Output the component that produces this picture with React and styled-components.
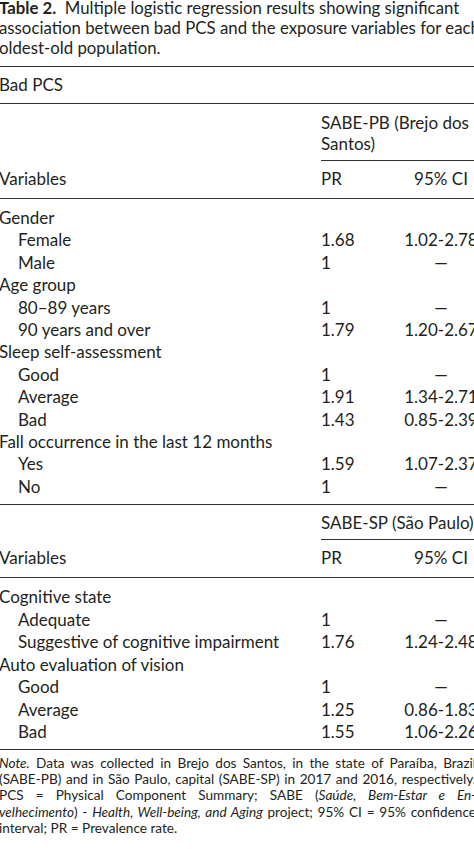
import styled, { createGlobalStyle } from "styled-components"

const GlobalStyle = createGlobalStyle`
    html, body {
        margin: 0;
        padding: 0;
        background: #FFFFFF;
        overflow: hidden;
    }
    body {
        font-family: Lato, "Open Sans", sans-serif;
        color: #231F20;
    }
`

const pb = [
    { label: "Gender" },
    { label: "Female", pr: "1.68", ci: "1.02-2.78", sub: true },
    { label: "Male", pr: "1", ci: "—", sub: true },
    { label: "Age group" },
    { label: "80–89 years", pr: "1", ci: "—", sub: true },
    { label: "90 years and over", pr: "1.79", ci: "1.20-2.67", sub: true },
    { label: "Sleep self-assessment" },
    { label: "Good", pr: "1", ci: "—", sub: true },
    { label: "Average", pr: "1.91", ci: "1.34-2.71", sub: true },
    { label: "Bad", pr: "1.43", ci: "0.85-2.39", sub: true },
    { label: "Fall occurrence in the last 12 months" },
    { label: "Yes", pr: "1.59", ci: "1.07-2.37", sub: true },
    { label: "No", pr: "1", ci: "—", sub: true },
]

const sp = [
    { label: "Cognitive state" },
    { label: "Adequate", pr: "1", ci: "—", sub: true },
    { label: "Suggestive of cognitive impairment", pr: "1.76", ci: "1.24-2.48", sub: true },
    { label: "Auto evaluation of vision" },
    { label: "Good", pr: "1", ci: "—", sub: true },
    { label: "Average", pr: "1.25", ci: "0.86-1.83", sub: true },
    { label: "Bad", pr: "1.55", ci: "1.06-2.26", sub: true },
]

function Block({ site, rows, top, bottom, rowHeight }){
    return(
        <>
            <HeadGroup $top={top}>
                <SiteCell>{site}</SiteCell>
            </HeadGroup>
            <Row $pad="7px 0 8px">
                <Label>Variables</Label>
                <Value>PR</Value>
                <Value $center>95% CI</Value>
            </Row>
            <Body $bottom={bottom}>
                {rows.map((r, i) => (
                    <Row key={i} $h={rowHeight}>
                        <Label $sub={r.sub}>{r.label}</Label>
                        <Value>{r.pr}</Value>
                        <Value $center>{r.ci}</Value>
                    </Row>
                ))}
            </Body>
        </>
    )
}

export default function App(){
    return(
        <SCPage>
            <GlobalStyle />
            <Caption>
                <b>Table 2.</b>&nbsp; Multiple logistic regression results showing significant<br />
                association between bad PCS and the exposure variables for each<br />
                oldest-old population.
            </Caption>
            <TitleRow>Bad PCS</TitleRow>
            <Block site="SABE-PB (Brejo dos Santos)" rows={pb} top="8px" bottom="6px" rowHeight="22.4px" />
            <Block site="SABE-SP (São Paulo)" rows={sp} top="7px" bottom="5px" rowHeight="22.5px" />
            <Note>
                <NoteLine><i>Note.</i> Data was collected in Brejo dos Santos, in the state of Paraíba, Brazil</NoteLine>
                <NoteLine>(SABE-PB) and in São Paulo, capital (SABE-SP) in 2017 and 2016, respectively.</NoteLine>
                <NoteLine>PCS = Physical Component Summary; SABE (<i>Saúde, Bem-Estar e En-</i></NoteLine>
                <NoteLine><i>velhecimento</i>) - <i>Health, Well-being, and Aging</i> project; 95% CI = 95% confidence</NoteLine>
                <NoteLine $last>interval; PR = Prevalence rate.</NoteLine>
            </Note>
        </SCPage>
    )
}

const SCPage = styled.div`
    width: 482px;
    margin-left: -1px;
`

const Caption = styled.p`
    margin: -2px 0 8px;
    font-size: 16.8px;
    line-height: 20px;
    white-space: nowrap;
    b{
        font-weight: 700;
    }
`

const TitleRow = styled.div`
    border-top: 1.3px solid #333333;
    border-bottom: 1.3px solid #333333;
    padding: 7px 0;
    font-size: 17px;
    line-height: 22px;
`

const HeadGroup = styled.div`
    display: grid;
    grid-template-columns: 322px 1fr;
    padding-top: ${p => p.$top};
`

const SiteCell = styled.div`
    grid-column: 2;
    font-size: 17px;
    line-height: 21px;
    padding-bottom: 6px;
    border-bottom: 1.3px solid #333333;
`

const Body = styled.div`
    border-top: 1.3px solid #333333;
    border-bottom: 1.3px solid #333333;
    padding: 8px 0 ${p => p.$bottom};
`

const Row = styled.div`
    display: grid;
    grid-template-columns: 322px 80px 80px;
    font-size: 17px;
    line-height: ${p => p.$h || "22px"};
    padding: ${p => p.$pad || "0"};
`

const Label = styled.div`
    padding-left: ${p => p.$sub ? "19px" : "0"};
    white-space: nowrap;
`

const Value = styled.div`
    white-space: nowrap;
    text-align: ${p => p.$center ? "center" : "left"};
`

const Note = styled.div`
    padding: 5px 5px 0 0;
    font-size: 13.6px;
    line-height: 16.3px;
`

const NoteLine = styled.div`
    text-align: ${p => p.$last ? "left" : "justify"};
    text-align-last: ${p => p.$last ? "left" : "justify"};
`
